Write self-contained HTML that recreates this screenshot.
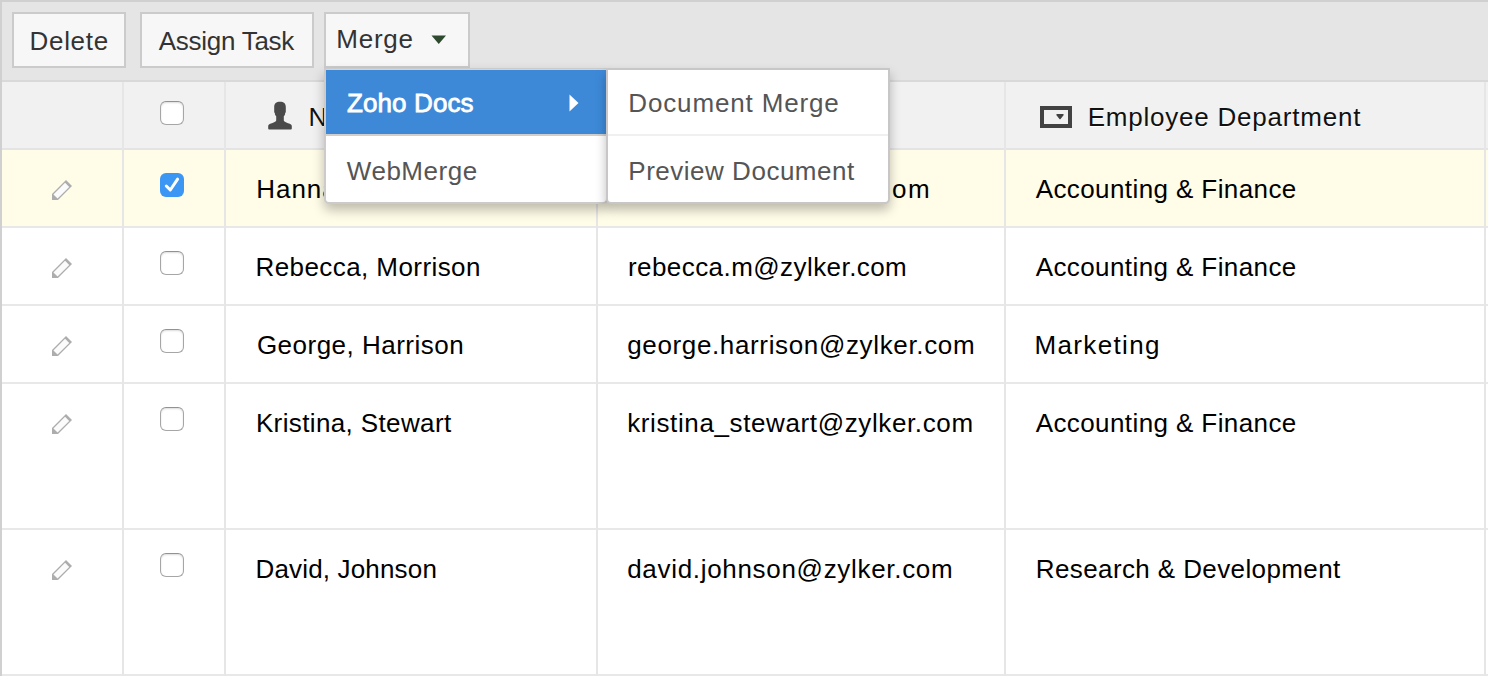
<!DOCTYPE html>
<html><head><meta charset="utf-8">
<style>
html,body{margin:0;padding:0}
body{width:1488px;height:676px;overflow:hidden;position:relative;background:#fff;font-family:"Liberation Sans",sans-serif}
.a{position:absolute}
.t{position:absolute;font-size:26px;line-height:26px;white-space:pre}
.hl{position:absolute;left:0;width:1488px;height:2px;background:#e8e8e8}
.vl{position:absolute;top:82px;width:2px;height:594px;background:#e6e6e6}
.btn{position:absolute;top:12px;height:52px;border:2px solid #cbcbcb;background:#f7f7f7}
.cb{position:absolute;left:160px;width:22px;height:22px;border:1px solid #a6a6a6;border-top-color:#929292;border-radius:6px;background:#fff;box-shadow:inset 0 1px 2px rgba(0,0,0,0.14)}
.pen{position:absolute;left:52px;width:20px;height:20px}
</style></head><body>
<!-- toolbar -->
<div class="a" style="left:0;top:0;width:1488px;height:80px;background:#e5e5e5"></div>
<div class="a" style="left:0;top:0;width:1488px;height:2px;background:#d0d0d0"></div>
<div class="a" style="left:0;top:80px;width:1488px;height:2px;background:#d9d9d9"></div>
<!-- header -->
<div class="a" style="left:2px;top:82px;width:1486px;height:66px;background:#f1f1f1"></div>
<div class="hl" style="top:148px;background:#e4e4e4"></div>
<!-- row1 highlight -->
<div class="a" style="left:2px;top:150px;width:1486px;height:76px;background:#fffce8"></div>
<div class="hl" style="top:226px"></div>
<div class="hl" style="top:304px"></div>
<div class="hl" style="top:382px"></div>
<div class="hl" style="top:528px"></div>
<div class="hl" style="top:674px"></div>
<div class="vl" style="left:122px"></div>
<div class="vl" style="left:224px"></div>
<div class="vl" style="left:596px"></div>
<div class="vl" style="left:1004px"></div>
<div class="vl" style="left:1484px"></div>
<div class="a" style="left:0;top:0;width:2px;height:676px;background:#d0d0d0"></div>
<!-- buttons -->
<div class="btn" style="left:12px;width:110px"></div>
<div class="btn" style="left:140px;width:170px"></div>
<div class="btn" style="left:324px;width:142px"></div>
<svg class="a" style="left:431px;top:35px" width="16" height="10" viewBox="0 0 16 10"><path d="M0.5 0.5 L15 0.5 L7.75 9 Z" fill="#2e4a2e"/></svg>
<!-- header icons -->
<svg class="a" style="left:264px;top:98px" width="32" height="36" viewBox="0 0 32 36"><path d="M16 3.7 C19.8 3.7 21.8 5.5 21.8 9 L21.8 13.8 C21.8 14.6 21.2 15.2 21 15.6 C21.2 16.2 21 17 20.3 17.8 L19.8 18.3 L19.8 22.6 C20.5 24.6 25 25.2 27 26.6 C27.6 27 27.8 27.6 27.8 28.2 L27.8 30.6 C27.8 31.2 27.4 31.5 26.9 31.5 L5.1 31.5 C4.6 31.5 4.2 31.2 4.2 30.6 L4.2 28.2 C4.2 27.6 4.4 27 5 26.6 C7 25.2 11.5 24.6 12.2 22.6 L12.2 18.3 L11.7 17.8 C11 17 10.8 16.2 11 15.6 C10.8 15.2 10.2 14.6 10.2 13.8 L10.2 9 C10.2 5.5 12.2 3.7 16 3.7 Z" fill="#4a4a4a"/></svg>
<svg class="a" style="left:1040px;top:106px" width="32" height="22" viewBox="0 0 32 22">
<rect x="2" y="2" width="28" height="18" fill="none" stroke="#424242" stroke-width="4"/>
<path d="M17 8.8 L23 8.8 L20 12.6 Z" fill="#424242" stroke="#424242" stroke-width="1.4" stroke-linejoin="round"/>
</svg>
<!-- checkboxes -->
<div class="cb" style="top:101px"></div>
<div class="a" style="left:160px;top:173px;width:24px;height:24px;border-radius:6px;background:#3c97f4"></div>
<svg class="a" style="left:160px;top:173px" width="24" height="24" viewBox="0 0 24 24"><path d="M6.3 13 L10.3 17 L17.6 6.2" fill="none" stroke="#fff" stroke-width="3" stroke-linecap="round" stroke-linejoin="round"/></svg>
<div class="cb" style="top:251px"></div>
<div class="cb" style="top:329px"></div>
<div class="cb" style="top:407px"></div>
<div class="cb" style="top:553px"></div>
<!-- pencils -->
<svg class="pen" style="top:180px" viewBox="0 0 20 20"><path d="M0 14 L14 0 L20 6 L6 20 L0 20 Z" fill="#adadad"/><path d="M1.42 14.42 L13.07 2.77 L17.23 6.93 L5.58 18.58 Z" fill="#fbfbfb"/></svg>
<svg class="pen" style="top:258px" viewBox="0 0 20 20"><path d="M0 14 L14 0 L20 6 L6 20 L0 20 Z" fill="#adadad"/><path d="M1.42 14.42 L13.07 2.77 L17.23 6.93 L5.58 18.58 Z" fill="#fbfbfb"/></svg>
<svg class="pen" style="top:336px" viewBox="0 0 20 20"><path d="M0 14 L14 0 L20 6 L6 20 L0 20 Z" fill="#adadad"/><path d="M1.42 14.42 L13.07 2.77 L17.23 6.93 L5.58 18.58 Z" fill="#fbfbfb"/></svg>
<svg class="pen" style="top:414px" viewBox="0 0 20 20"><path d="M0 14 L14 0 L20 6 L6 20 L0 20 Z" fill="#adadad"/><path d="M1.42 14.42 L13.07 2.77 L17.23 6.93 L5.58 18.58 Z" fill="#fbfbfb"/></svg>
<svg class="pen" style="top:560px" viewBox="0 0 20 20"><path d="M0 14 L14 0 L20 6 L6 20 L0 20 Z" fill="#adadad"/><path d="M1.42 14.42 L13.07 2.77 L17.23 6.93 L5.58 18.58 Z" fill="#fbfbfb"/></svg>
<div class="t" style="left:29.50px;top:28px;font-weight:normal;color:#333;letter-spacing:0.701px">Delete</div>
<div class="t" style="left:158.70px;top:28px;font-weight:normal;color:#333;letter-spacing:-0.262px">Assign Task</div>
<div class="t" style="left:336.30px;top:26px;font-weight:normal;color:#333;letter-spacing:0.766px">Merge</div>
<div class="t" style="left:308.50px;top:104px;font-weight:normal;color:#111;letter-spacing:0.000px;text-shadow:0 1px 0 #fff">Name</div>
<div class="t" style="left:1087.70px;top:104px;font-weight:normal;color:#111;letter-spacing:0.780px;text-shadow:0 1px 0 #fff">Employee Department</div>
<div class="t" style="left:256.30px;top:176px;font-weight:normal;color:#000;letter-spacing:0.935px">Hannah, Scott</div>
<div class="t" style="left:892.02px;top:176px;font-weight:normal;color:#000;letter-spacing:1.500px">om</div>
<div class="t" style="left:1035.70px;top:176px;font-weight:normal;color:#000;letter-spacing:0.402px">Accounting &amp; Finance</div>
<div class="t" style="left:255.50px;top:254px;font-weight:normal;color:#000;letter-spacing:0.423px">Rebecca, Morrison</div>
<div class="t" style="left:628.00px;top:254px;font-weight:normal;color:#000;letter-spacing:0.431px">rebecca.m@zylker.com</div>
<div class="t" style="left:1035.70px;top:254px;font-weight:normal;color:#000;letter-spacing:0.402px">Accounting &amp; Finance</div>
<div class="t" style="left:256.90px;top:332px;font-weight:normal;color:#000;letter-spacing:0.489px">George, Harrison</div>
<div class="t" style="left:627.20px;top:332px;font-weight:normal;color:#000;letter-spacing:0.642px">george.harrison@zylker.com</div>
<div class="t" style="left:1034.50px;top:332px;font-weight:normal;color:#000;letter-spacing:1.350px">Marketing</div>
<div class="t" style="left:255.90px;top:410px;font-weight:normal;color:#000;letter-spacing:0.377px">Kristina, Stewart</div>
<div class="t" style="left:627.20px;top:410px;font-weight:normal;color:#000;letter-spacing:0.617px">kristina_stewart@zylker.com</div>
<div class="t" style="left:1035.70px;top:410px;font-weight:normal;color:#000;letter-spacing:0.402px">Accounting &amp; Finance</div>
<div class="t" style="left:255.50px;top:556px;font-weight:normal;color:#000;letter-spacing:0.165px">David, Johnson</div>
<div class="t" style="left:627.20px;top:556px;font-weight:normal;color:#000;letter-spacing:0.687px">david.johnson@zylker.com</div>
<div class="t" style="left:1035.80px;top:556px;font-weight:normal;color:#000;letter-spacing:0.389px">Research &amp; Development</div>
<!-- menu -->
<div class="a" style="left:324px;top:68px;width:280px;height:132px;background:#fff;border:2px solid #cdcaca;border-top:2px solid #cbcbcb;border-radius:0 0 5px 5px;box-shadow:0 6px 12px rgba(0,0,0,0.26)"></div>
<div class="a" style="left:326px;top:69px;width:280px;height:1px;background:#d9d3cf"></div>
<div class="a" style="left:326px;top:70px;width:282px;height:64px;background:#3d89d8"></div>
<div class="a" style="left:326px;top:134px;width:280px;height:2px;background:#d2ceca"></div>
<svg class="a" style="left:569px;top:94px" width="10" height="18" viewBox="0 0 10 18"><path d="M0.5 0.5 L9.5 9 L0.5 17.5 Z" fill="#fff"/></svg>
<div class="a" style="left:606px;top:68px;width:280px;height:132px;background:#fff;border:2px solid #c9c6c8;border-radius:0 0 5px 5px;box-shadow:0 6px 11px rgba(0,0,0,0.26)"></div>
<div class="a" style="left:608px;top:134px;width:280px;height:2px;background:#f0f0f0"></div>
<div class="t" style="left:346.90px;top:90px;font-weight:normal;color:#fff;letter-spacing:0.122px;-webkit-text-stroke:0.8px #fff">Zoho Docs</div>
<div class="t" style="left:346.80px;top:158px;font-weight:normal;color:#555;letter-spacing:0.525px">WebMerge</div>
<div class="t" style="left:628.30px;top:90px;font-weight:normal;color:#555;letter-spacing:0.849px">Document Merge</div>
<div class="t" style="left:628.30px;top:158px;font-weight:normal;color:#555;letter-spacing:0.515px">Preview Document</div>
</body></html>
